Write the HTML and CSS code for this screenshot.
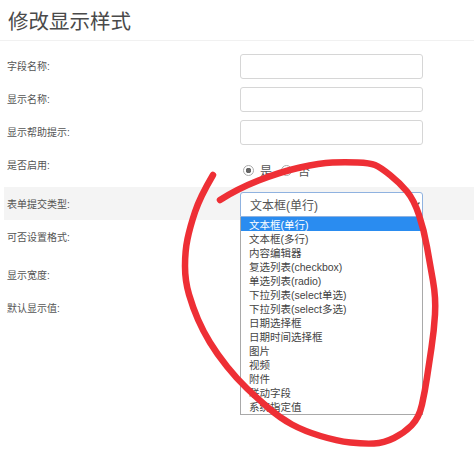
FILE: index.html
```html
<!DOCTYPE html>
<html lang="zh-CN">
<head>
    <meta charset="UTF-8">
    <meta name="viewport" content="width=device-width, initial-scale=1.0">
    <title>修改显示样式</title>
    <link rel="stylesheet" href="styles.css">
</head>
<body>
    <h1 class="page-title">修改显示样式</h1>
    <div class="form">
        <div class="row">
            <label class="row-label">字段名称:</label>
            <div class="text-box"></div>
        </div>
        <div class="row">
            <label class="row-label">显示名称:</label>
            <div class="text-box"></div>
        </div>
        <div class="row">
            <label class="row-label">显示帮助提示:</label>
            <div class="text-box"></div>
        </div>
        <div class="row row-radio">
            <label class="row-label">是否启用:</label>
            <div class="radio-group">
                <span class="radio radio-on"></span><span class="radio-text">是</span>
                <span class="radio"></span><span class="radio-text">否</span>
            </div>
        </div>
        <div class="row row-active">
            <label class="row-label">表单提交类型:</label>
            <div class="select-wrap">
                <div class="select-box">
                    <span>文本框(单行)</span>
                    <svg class="select-arrow" width="8" height="5" viewBox="0 0 8 5"><path d="M0.5 0.5 L4 4 L7.5 0.5" fill="none" stroke="#555" stroke-width="1.4"/></svg>
                </div>
                <ul class="select-list">
                    <li class="selected">文本框(单行)</li>
                    <li>文本框(多行)</li>
                    <li>内容编辑器</li>
                    <li>复选列表(checkbox)</li>
                    <li>单选列表(radio)</li>
                    <li>下拉列表(select单选)</li>
                    <li>下拉列表(select多选)</li>
                    <li>日期选择框</li>
                    <li>日期时间选择框</li>
                    <li>图片</li>
                    <li>视频</li>
                    <li>附件</li>
                    <li>联动字段</li>
                    <li>系统指定值</li>
                </ul>
            </div>
        </div>
        <div class="row">
            <label class="row-label">可否设置格式:</label>
        </div>
        <div class="row row-wide">
            <label class="row-label">显示宽度:</label>
        </div>
        <div class="row">
            <label class="row-label">默认显示值:</label>
        </div>
    </div>
    <svg class="scribble" width="474" height="462" viewBox="0 0 474 462">
        <path d="M213 175 Q200 197 195 212 Q190 227 187.5 239 Q185 251 185 266 Q185 281 189 294.5 Q193 308 198 319.5 Q203 331 210 342.5 Q217 354 227 366.5 Q237 379 247 388.5 Q257 398 268.5 408 Q280 418 292 424.5 Q304 431 320.5 436 Q337 441 350.5 442.5 Q364 444 374 443.5 Q384 443 394 438 Q404 433 411.5 425.5 Q419 418 422 404.5 Q425 391 427 377.5 Q429 364 431.5 347.5 Q434 331 435 314.5 Q436 298 433 281 Q430 264 427 247 Q424 230 419 215 Q414 200 407 191.5 Q400 183 390 175 Q380 167 375 165 Q370 163 357.5 162.5 Q345 162 332.5 162.5 Q320 163 300 167.5 Q280 172 258.5 180.5 Q237 189 220 200" fill="none" stroke="#ee2f35" stroke-width="6.5" stroke-linecap="round" stroke-linejoin="round"/>
    </svg>
</body>
</html>
```

FILE: styles.css
```css
body {
    margin: 0;
    background: #fff;
    color: #555;
    font-family: "Liberation Sans", "Noto Sans CJK SC", sans-serif;
    position: relative;
    height: 462px;
    overflow: hidden;
}
.page-title {
    margin: 0;
    height: 40px;
    padding-left: 8px;
    border-bottom: 1px solid #f1f1f1;
    font-size: 20.5px;
    font-weight: 400;
    line-height: 43px;
    color: #4a4a4a;
}
.form {
    padding: 8px 0 0 4px;
}
.row {
    display: flex;
    align-items: center;
    height: 33px;
}
.row-label {
    width: 233px;
    padding-left: 3px;
    font-size: 10px;
    flex-shrink: 0;
}
.text-box {
    box-sizing: border-box;
    width: 183px;
    height: 25px;
    margin-top: 2px;
    border: 1px solid #d6d6d6;
    border-radius: 3px;
    background: #fff;
}
.row-radio {
    margin-bottom: 6px;
}
.radio-group {
    display: flex;
    align-items: center;
    padding: 12px 0 0 3px;
    font-size: 12px;
}
.radio {
    box-sizing: border-box;
    width: 11px;
    height: 11px;
    border: 1px solid #aaa;
    border-radius: 50%;
    background: #fff;
}
.radio-on {
    background: radial-gradient(circle, #666 0, #666 2.5px, #fff 3px);
}
.radio-text {
    margin: 0 9px 0 6px;
}
.row-active {
    background: #f4f4f4;
}
.select-wrap {
    position: relative;
    width: 183px;
    margin-top: 2px;
}
.select-box {
    box-sizing: border-box;
    display: flex;
    align-items: center;
    justify-content: space-between;
    height: 25px;
    padding: 0 2px 0 9px;
    border: 1px solid #8fb2e0;
    border-radius: 3px 3px 0 0;
    background: #fff;
    font-size: 12px;
}
.select-arrow {
    flex-shrink: 0;
}
.select-list {
    position: absolute;
    top: 25px;
    left: 0;
    right: 0;
    margin: 0;
    padding: 0;
    list-style: none;
    box-sizing: border-box;
    height: 198px;
    border: 1px solid #a9a9a9;
    border-top: 0;
    background: #fff;
    font-size: 10.5px;
    color: #444;
}
.select-list li {
    height: 14px;
    line-height: 16px;
    padding-left: 8px;
    white-space: nowrap;
}
.select-list .selected {
    background: #2a8cf0;
    color: #fff;
}
.row-wide {
    margin-top: 5px;
}
.scribble {
    position: absolute;
    top: 0;
    left: 0;
}
```
